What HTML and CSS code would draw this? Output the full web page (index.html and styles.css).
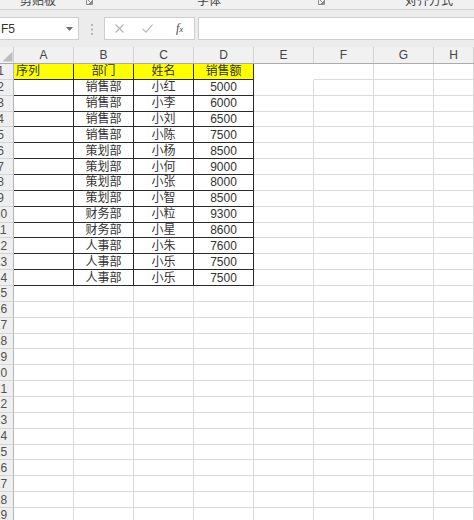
FILE: index.html
```html
<!DOCTYPE html>
<html lang="zh-CN">
<head>
<meta charset="utf-8">
<title>Sheet</title>
<link rel="stylesheet" href="styles.css">
</head>
<body>
<div class="app">
  <div class="ribbon">
    <div class="grp g1"><span class="glabel">剪贴板</span><svg class="launch" width="7" height="7" viewBox="0 0 7 7"><path d="M0.5 0.5h6v6h-6z M2 2l3.5 3.5 M5.5 3v2.5h-2.5" fill="none" stroke="#8a8a8a" stroke-width="1"/></svg></div>
    <div class="grp g2"><span class="glabel">字体</span><svg class="launch" width="7" height="7" viewBox="0 0 7 7"><path d="M0.5 0.5h6v6h-6z M2 2l3.5 3.5 M5.5 3v2.5h-2.5" fill="none" stroke="#8a8a8a" stroke-width="1"/></svg></div>
    <div class="grp g3"><span class="glabel">对齐方式</span></div>
  </div>

  <div class="fbar">
    <div class="namebox">
      <span class="ref">F5</span>
      <svg class="dd" width="7" height="4" viewBox="0 0 7 4"><path d="M0 0h7L3.5 4z" fill="#6e6e6e"/></svg>
    </div>
    <svg class="grip" width="2" height="11" viewBox="0 0 2 11"><rect x="0" y="0" width="2" height="2" fill="#b8b8b8"/><rect x="0" y="4.5" width="2" height="2" fill="#b8b8b8"/><rect x="0" y="9" width="2" height="2" fill="#b8b8b8"/></svg>
    <div class="fbtns">
      <svg class="bx" width="9" height="9" viewBox="0 0 9 9"><path d="M0.5 0.5l8 8M8.5 0.5l-8 8" stroke="#b3b3b3" stroke-width="1.1" fill="none"/></svg>
      <svg class="bcheck" width="11" height="9" viewBox="0 0 11 9"><path d="M0.5 4.8l3.4 3.4 6.6-7.6" stroke="#b3b3b3" stroke-width="1.1" fill="none"/></svg>
      <span class="fx"><i>f</i><span class="fxx">x</span></span>
    </div>
    <div class="finput"></div>
  </div>

  <div class="colhead">
    <div class="corner"><svg width="14" height="16" viewBox="0 0 14 16"><path d="M12.5 4.5v10h-10z" fill="#bdbdbd"/></svg></div>
    <div class="ch">A</div><div class="ch">B</div><div class="ch">C</div><div class="ch">D</div><div class="ch">E</div><div class="ch">F</div><div class="ch">G</div><div class="ch">H</div>
  </div>

  <div class="sheet">
    <div class="row"><div class="rh"><span class="rn">1</span></div><div class="c t y left">序列</div><div class="c t y">部门</div><div class="c t y">姓名</div><div class="c t y">销售额</div><div class="c e1"></div><div class="c"></div><div class="c"></div><div class="c"></div></div>
    <div class="row"><div class="rh"><span class="rn">2</span></div><div class="c t"></div><div class="c t">销售部</div><div class="c t">小红</div><div class="c t">5000</div><div class="c"></div><div class="c"></div><div class="c"></div><div class="c"></div></div>
    <div class="row"><div class="rh"><span class="rn">3</span></div><div class="c t"></div><div class="c t">销售部</div><div class="c t">小李</div><div class="c t">6000</div><div class="c"></div><div class="c"></div><div class="c"></div><div class="c"></div></div>
    <div class="row"><div class="rh"><span class="rn">4</span></div><div class="c t"></div><div class="c t">销售部</div><div class="c t">小刘</div><div class="c t">6500</div><div class="c"></div><div class="c"></div><div class="c"></div><div class="c"></div></div>
    <div class="row"><div class="rh"><span class="rn">5</span></div><div class="c t"></div><div class="c t">销售部</div><div class="c t">小陈</div><div class="c t">7500</div><div class="c"></div><div class="c"></div><div class="c"></div><div class="c"></div></div>
    <div class="row"><div class="rh"><span class="rn">6</span></div><div class="c t"></div><div class="c t">策划部</div><div class="c t">小杨</div><div class="c t">8500</div><div class="c"></div><div class="c"></div><div class="c"></div><div class="c"></div></div>
    <div class="row"><div class="rh"><span class="rn">7</span></div><div class="c t"></div><div class="c t">策划部</div><div class="c t">小何</div><div class="c t">9000</div><div class="c"></div><div class="c"></div><div class="c"></div><div class="c"></div></div>
    <div class="row"><div class="rh"><span class="rn">8</span></div><div class="c t"></div><div class="c t">策划部</div><div class="c t">小张</div><div class="c t">8000</div><div class="c"></div><div class="c"></div><div class="c"></div><div class="c"></div></div>
    <div class="row"><div class="rh"><span class="rn">9</span></div><div class="c t"></div><div class="c t">策划部</div><div class="c t">小智</div><div class="c t">8500</div><div class="c"></div><div class="c"></div><div class="c"></div><div class="c"></div></div>
    <div class="row"><div class="rh"><span class="rn">10</span></div><div class="c t"></div><div class="c t">财务部</div><div class="c t">小粒</div><div class="c t">9300</div><div class="c"></div><div class="c"></div><div class="c"></div><div class="c"></div></div>
    <div class="row"><div class="rh"><span class="rn">11</span></div><div class="c t"></div><div class="c t">财务部</div><div class="c t">小星</div><div class="c t">8600</div><div class="c"></div><div class="c"></div><div class="c"></div><div class="c"></div></div>
    <div class="row"><div class="rh"><span class="rn">12</span></div><div class="c t"></div><div class="c t">人事部</div><div class="c t">小朱</div><div class="c t">7600</div><div class="c"></div><div class="c"></div><div class="c"></div><div class="c"></div></div>
    <div class="row"><div class="rh"><span class="rn">13</span></div><div class="c t"></div><div class="c t">人事部</div><div class="c t">小乐</div><div class="c t">7500</div><div class="c"></div><div class="c"></div><div class="c"></div><div class="c"></div></div>
    <div class="row"><div class="rh"><span class="rn">14</span></div><div class="c t"></div><div class="c t">人事部</div><div class="c t">小乐</div><div class="c t">7500</div><div class="c"></div><div class="c"></div><div class="c"></div><div class="c"></div></div>
    <div class="row"><div class="rh"><span class="rn">15</span></div><div class="c"></div><div class="c"></div><div class="c"></div><div class="c"></div><div class="c"></div><div class="c"></div><div class="c"></div><div class="c"></div></div>
    <div class="row"><div class="rh"><span class="rn">16</span></div><div class="c"></div><div class="c"></div><div class="c"></div><div class="c"></div><div class="c"></div><div class="c"></div><div class="c"></div><div class="c"></div></div>
    <div class="row"><div class="rh"><span class="rn">17</span></div><div class="c"></div><div class="c"></div><div class="c"></div><div class="c"></div><div class="c"></div><div class="c"></div><div class="c"></div><div class="c"></div></div>
    <div class="row"><div class="rh"><span class="rn">18</span></div><div class="c"></div><div class="c"></div><div class="c"></div><div class="c"></div><div class="c"></div><div class="c"></div><div class="c"></div><div class="c"></div></div>
    <div class="row"><div class="rh"><span class="rn">19</span></div><div class="c"></div><div class="c"></div><div class="c"></div><div class="c"></div><div class="c"></div><div class="c"></div><div class="c"></div><div class="c"></div></div>
    <div class="row"><div class="rh"><span class="rn">20</span></div><div class="c"></div><div class="c"></div><div class="c"></div><div class="c"></div><div class="c"></div><div class="c"></div><div class="c"></div><div class="c"></div></div>
    <div class="row"><div class="rh"><span class="rn">21</span></div><div class="c"></div><div class="c"></div><div class="c"></div><div class="c"></div><div class="c"></div><div class="c"></div><div class="c"></div><div class="c"></div></div>
    <div class="row"><div class="rh"><span class="rn">22</span></div><div class="c"></div><div class="c"></div><div class="c"></div><div class="c"></div><div class="c"></div><div class="c"></div><div class="c"></div><div class="c"></div></div>
    <div class="row"><div class="rh"><span class="rn">23</span></div><div class="c"></div><div class="c"></div><div class="c"></div><div class="c"></div><div class="c"></div><div class="c"></div><div class="c"></div><div class="c"></div></div>
    <div class="row"><div class="rh"><span class="rn">24</span></div><div class="c"></div><div class="c"></div><div class="c"></div><div class="c"></div><div class="c"></div><div class="c"></div><div class="c"></div><div class="c"></div></div>
    <div class="row"><div class="rh"><span class="rn">25</span></div><div class="c"></div><div class="c"></div><div class="c"></div><div class="c"></div><div class="c"></div><div class="c"></div><div class="c"></div><div class="c"></div></div>
    <div class="row"><div class="rh"><span class="rn">26</span></div><div class="c"></div><div class="c"></div><div class="c"></div><div class="c"></div><div class="c"></div><div class="c"></div><div class="c"></div><div class="c"></div></div>
    <div class="row"><div class="rh"><span class="rn">27</span></div><div class="c"></div><div class="c"></div><div class="c"></div><div class="c"></div><div class="c"></div><div class="c"></div><div class="c"></div><div class="c"></div></div>
    <div class="row"><div class="rh"><span class="rn">28</span></div><div class="c"></div><div class="c"></div><div class="c"></div><div class="c"></div><div class="c"></div><div class="c"></div><div class="c"></div><div class="c"></div></div>
    <div class="row"><div class="rh"><span class="rn">29</span></div><div class="c"></div><div class="c"></div><div class="c"></div><div class="c"></div><div class="c"></div><div class="c"></div><div class="c"></div><div class="c"></div></div>
    <div class="row"><div class="rh"><span class="rn">30</span></div><div class="c"></div><div class="c"></div><div class="c"></div><div class="c"></div><div class="c"></div><div class="c"></div><div class="c"></div><div class="c"></div></div>
  </div>
</div>
</body>
</html>
```

FILE: styles.css
```css
* { box-sizing: border-box; }

html, body {
  margin: 0;
  padding: 0;
  background: #ffffff;
}

body {
  width: 474px;
  height: 520px;
  overflow: hidden;
  font-family: "Liberation Sans", "Noto Sans CJK SC", sans-serif;
  font-size: 12px;
  color: #333333;
}

.app {
  width: 474px;
  height: 520px;
  overflow: hidden;
  display: flex;
  flex-direction: column;
}

/* ribbon group labels (cut at top) */
.ribbon {
  flex: none;
  height: 10px;
  display: flex;
  background: #f1f1f1;
  border-bottom: 1px solid #d6d6d6;
  overflow: hidden;
}

.grp {
  flex: none;
  display: flex;
  align-items: flex-start;
}

.g1 { width: 95px; padding-left: 20px; }
.g2 { width: 235px; padding-left: 102px; }
.g3 { flex: 1; padding-left: 75px; }

.glabel {
  font-family: "Noto Sans CJK SC", sans-serif;
  font-size: 12px;
  line-height: 12px;
  color: #444444;
  margin-top: -6px;
}

.launch {
  margin-left: auto;
  margin-right: 2px;
  margin-top: -2px;
}

.g2 .launch { margin-right: 5px; }

/* formula bar */
.fbar {
  flex: none;
  height: 37px;
  display: flex;
  align-items: flex-start;
  padding-top: 7px;
  background: #ececec;
}

.namebox {
  flex: none;
  width: 80px;
  height: 23px;
  margin-left: -1px;
  background: #ffffff;
  border: 1px solid #cdcdcd;
  display: flex;
  align-items: center;
}

.ref {
  padding-left: 1px;
  font-size: 12px;
  color: #333333;
}

.dd {
  margin-left: auto;
  margin-right: 5px;
}

.grip {
  flex: none;
  margin-left: 12px;
  margin-top: 7px;
}

.fbtns {
  flex: none;
  width: 91px;
  height: 23px;
  margin-left: 11px;
  background: #ffffff;
  border: 1px solid #cdcdcd;
  display: flex;
  align-items: center;
}

.bx { margin-left: 10px; }
.bcheck { margin-left: 18px; }

.fx {
  margin-left: 23px;
  font-family: "Liberation Serif", serif;
  font-size: 12px;
  color: #4a4a4a;
  display: flex;
  align-items: baseline;
}

.fxx {
  font-style: italic;
  font-size: 9px;
  margin-left: 0px;
}

.finput {
  flex: 1;
  height: 23px;
  margin-left: 3px;
  margin-right: -1px;
  background: #ffffff;
  border: 1px solid #cdcdcd;
}

/* column header */
.colhead {
  flex: none;
  height: 17px;
  display: grid;
  grid-template-columns: 14px repeat(7, 60px) 1fr;
  background: #f1f1f1;
  border-bottom: 1px solid #ababab;
}

.corner {
  border-right: 1px solid #d0d0d0;
  overflow: hidden;
}

.corner svg { display: block; }

.ch {
  border-right: 1px solid #d3d3d3;
  text-align: center;
  font-size: 12px;
  line-height: 16px;
  color: #444444;
}

/* sheet grid */
.sheet {
  flex: none;
  display: flex;
  flex-direction: column;
}

.row {
  flex: none;
  height: 15.86px;
  display: grid;
  grid-template-columns: 14px repeat(7, 60px) 1fr;
}

.rh {
  background: #efefef;
  border-right: 1px solid #b5b5b5;
  border-bottom: 1px solid #d4d4d4;
  overflow: hidden;
  display: flex;
  align-items: center;
}

.rn {
  flex: none;
  width: 24px;
  margin-left: -11.5px;
  text-align: center;
  font-size: 12px;
  line-height: 14px;
  color: #505050;
}

.c {
  border-right: 1px solid #dadada;
  border-bottom: 1px solid #dadada;
  display: flex;
  align-items: center;
  justify-content: center;
  font-size: 12px;
  line-height: 14px;
  color: #333333;
  white-space: nowrap;
  overflow: hidden;
}

.c.t {
  border-right-color: #2a2a2a;
  border-bottom-color: #2a2a2a;
}

.c.y { background: #ffff00; }

.c.left {
  justify-content: flex-start;
  padding-left: 2px;
}

.c.e1 {
  border-right-color: #ffffff;
  border-bottom-color: #ffffff;
}
```
